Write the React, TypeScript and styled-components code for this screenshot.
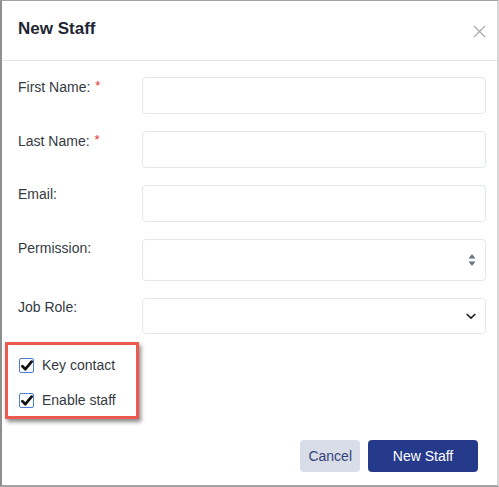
import React from "react";
import styled, { createGlobalStyle } from "styled-components";

const Global = createGlobalStyle`
  html, body { margin: 0; padding: 0; background: #ffffff; }
  * { box-sizing: border-box; }
`;

const Modal = styled.div`
  width: 499px;
  height: 487px;
  background: #fff;
  border-left: 2px solid #8f8f8f;
  border-top: 1px solid #a3a3a3;
  border-bottom: 2px solid #a3a3a3;
  border-right: 2px solid #d6d6d6;
  display: flex;
  flex-direction: column;
  font-family: "Liberation Sans", Arial, sans-serif;
`;

const Header = styled.div`
  height: 60px;
  border-bottom: 1px solid #dfe5ec;
  display: flex;
  align-items: center;
  justify-content: space-between;
  padding: 0 11px 4px 16px;
`;

const Title = styled.h2`
  margin: 0;
  font-family: "Liberation Sans", Arial, sans-serif;
  font-weight: 700;
  font-size: 17px;
  color: #1f2633;
  letter-spacing: 0;
`;

const Close = styled.button`
  border: 0;
  background: transparent;
  padding: 0;
  width: 13px;
  height: 13px;
  display: flex;
  margin-top: 6px;
  cursor: pointer;
`;

const Body = styled.div`
  padding: 16px 11px 0 16px;
  display: flex;
  flex-direction: column;
`;

const Form = styled.div`
  display: grid;
  grid-template-columns: 124px 1fr;
  row-gap: 17px;
`;

const Label = styled.label`
  font-size: 14px;
  line-height: 16px;
  color: #353a42;
  padding-top: 1px;
`;

const Req = styled.span`
  color: #e3342f;
  font-size: 13px;
  vertical-align: 2px;
  margin-left: 5px;
`;

const Field = styled.div<{ $h: number }>`
  height: ${(p) => p.$h}px;
  border: 1px solid #e2e8ee;
  border-radius: 4px;
  background: #fff;
  position: relative;
  display: flex;
  align-items: center;
  justify-content: flex-end;
  padding-right: 9px;
`;

const Input = styled.input`
  border: 0;
  outline: none;
  background: transparent;
  width: 100%;
  height: 100%;
  padding: 0 10px;
  font-size: 14px;
  font-family: inherit;
`;

const Callout = styled.div`
  margin: 8px 0 0 -13px;
  width: 134px;
  border: 3px solid #ea5a4f;
  box-shadow: 2px 3px 4px rgba(0, 0, 0, 0.45);
  padding: 10px 0 6px 11px;
  display: flex;
  flex-direction: column;
  gap: 15px;
`;

const CheckRow = styled.label`
  display: flex;
  align-items: center;
  height: 20px;
  gap: 8px;
  font-size: 14px;
  color: #353a42;
`;

const Box = styled.span`
  width: 15px;
  height: 15px;
  border: 1px solid #4a7ed6;
  border-radius: 2px;
  background: #fff;
  display: flex;
  align-items: center;
  justify-content: center;
`;

const Footer = styled.div`
  margin-top: auto;
  display: flex;
  justify-content: flex-end;
  gap: 8px;
  padding: 0 19px 13px 0;
`;

const Button = styled.button<{ $primary?: boolean }>`
  height: 32px;
  border: 0;
  border-radius: 4px;
  font-family: "Liberation Sans", Arial, sans-serif;
  font-size: 14px;
  padding: 0 ${(p) => (p.$primary ? 24 : 8)}px;
  min-width: ${(p) => (p.$primary ? 110 : 59)}px;
  background: ${(p) => (p.$primary ? "#263a8c" : "#d8dde8")};
  color: ${(p) => (p.$primary ? "#ffffff" : "#34427a")};
  cursor: pointer;
`;

const Check = () => (
  <svg width="12" height="11" viewBox="0 0 12 11">
    <path d="M1.4 6.2 L4.4 9.2 L10.6 1.6" fill="none" stroke="#111" strokeWidth="2.7" strokeLinecap="round" strokeLinejoin="round" />
  </svg>
);

const Spinner = () => (
  <svg width="8" height="14" viewBox="0 0 8 14">
    <path d="M4 1 L7.5 5.5 L0.5 5.5 Z" fill="#6b7280" />
    <path d="M4 13 L7.5 8.5 L0.5 8.5 Z" fill="#6b7280" />
  </svg>
);

const Chevron = () => (
  <svg width="10" height="7" viewBox="0 0 10 7">
    <path d="M1.2 1.5 L5 5.2 L8.8 1.5" fill="none" stroke="#222" strokeWidth="1.7" strokeLinecap="round" strokeLinejoin="round" />
  </svg>
);

export default function App() {
  return (
    <>
      <Global />
      <Modal>
        <Header>
          <Title>New Staff</Title>
          <Close aria-label="Close">
            <svg width="13" height="13" viewBox="0 0 13 13">
              <path d="M1 1 L12 12 M12 1 L1 12" stroke="#a9a9a9" strokeWidth="1.2" />
            </svg>
          </Close>
        </Header>
        <Body>
          <Form>
            <Label>
              First Name:<Req>*</Req>
            </Label>
            <Field $h={37}>
              <Input />
            </Field>
            <Label>
              Last Name:<Req>*</Req>
            </Label>
            <Field $h={37}>
              <Input />
            </Field>
            <Label>Email:</Label>
            <Field $h={37}>
              <Input />
            </Field>
            <Label>Permission:</Label>
            <Field $h={42}>
              <Spinner />
            </Field>
            <Label>Job Role:</Label>
            <Field $h={36}>
              <Chevron />
            </Field>
          </Form>
          <Callout>
            <CheckRow>
              <Box>
                <Check />
              </Box>
              Key contact
            </CheckRow>
            <CheckRow>
              <Box>
                <Check />
              </Box>
              Enable staff
            </CheckRow>
          </Callout>
        </Body>
        <Footer>
          <Button>Cancel</Button>
          <Button $primary>New Staff</Button>
        </Footer>
      </Modal>
    </>
  );
}
